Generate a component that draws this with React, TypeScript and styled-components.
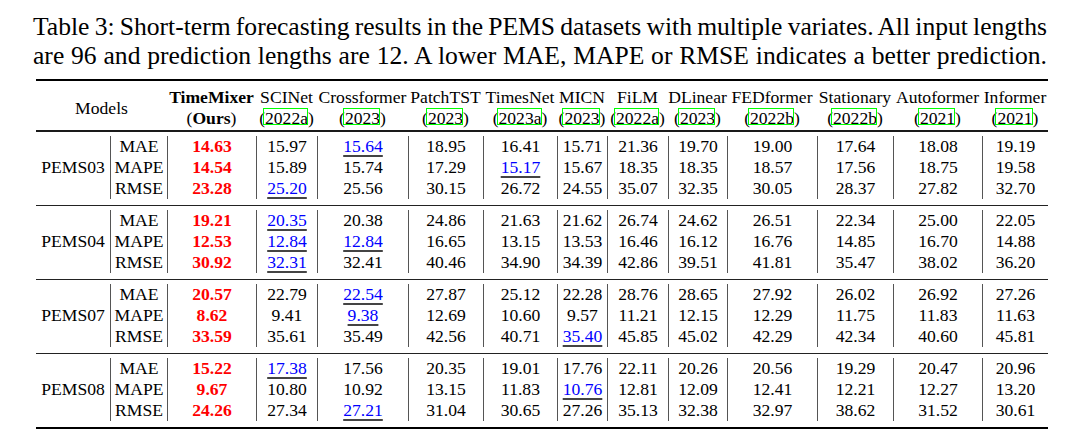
import React from 'react';
import styled, { createGlobalStyle, css } from 'styled-components';

const SERIF = '"Liberation Serif", "Times New Roman", "DejaVu Serif", serif';

const GlobalStyle = createGlobalStyle`
  html, body { margin: 0; padding: 0; background: #fff; }
  body { font-family: ${SERIF}; color: #000; }
`;

const COLS = '74px 57px 89px 61px 91px 75px 74px 50px 61px 59px 90px 76px 89px 66px';

type Kind = 'n' | 'b' | 's';

const Page = styled.div`
  width: 1080px;
  height: 446px;
  box-sizing: border-box;
  padding: 13px 0 0 33px;
  overflow: hidden;
  font-family: ${SERIF};
`;

const Caption = styled.div`
  width: 1014px;
  font-family: ${SERIF};
  font-size: 25.6px;
  line-height: 28.5px;
  color: #000;
`;

const CaptionLine = styled.p<{ $spacing: number }>`
  margin: 0;
  font-family: ${SERIF};
  text-align: justify;
  text-align-last: justify;
  word-spacing: ${(p) => p.$spacing}px;
`;

const Table = styled.div`
  margin: 9px 0 0 3px;
  width: 1012px;
  font-family: ${SERIF};
  font-size: 17.6px;
  line-height: 21px;
  color: #000;
  border-top: 2px solid #000;
  border-bottom: 2px solid #000;
`;

const HeaderRow = styled.div`
  display: grid;
  grid-template-columns: ${COLS};
  padding: 6px 0 1px;
  border-bottom: 2px solid #1a1a1a;
`;

const ModelsCell = styled.div`
  grid-column: span 2;
  display: flex;
  align-items: center;
  justify-content: center;
`;

const HeadCell = styled.div`
  display: flex;
  flex-direction: column;
  align-items: center;
  white-space: nowrap;
`;

const HeadName = styled.span<{ $bold?: boolean }>`
  font-weight: ${(p) => (p.$bold ? 700 : 400)};
`;

const Strong = styled.b`
  font-weight: 700;
`;

const Cite = styled.span`
  position: relative;
  &::after {
    content: '';
    position: absolute;
    left: -2px;
    right: 0;
    top: 0;
    bottom: 3px;
    border: 1px solid #00ff00;
  }
`;

const Group = styled.div`
  display: grid;
  grid-template-columns: ${COLS};
  grid-template-rows: repeat(3, 21px);
  padding: 4px 0 6px;
  & + & {
    border-top: 1px solid #222;
  }
`;

const DatasetCell = styled.div`
  grid-column: 1;
  grid-row: 1 / span 3;
  display: flex;
  align-items: center;
  justify-content: center;
  white-space: nowrap;
`;

const MetricCell = styled.div`
  grid-column: 2;
  border-left: 1px solid #555;
  text-align: center;
  white-space: nowrap;
`;

const ValueCell = styled.div`
  border-left: 1px solid #555;
  text-align: center;
  white-space: nowrap;
`;

const Value = styled.span<{ $kind: Kind }>`
  ${(p) =>
    p.$kind === 'b' &&
    css`
      color: #ff0000;
      font-weight: 700;
    `}
  ${(p) =>
    p.$kind === 's' &&
    css`
      color: #0000ff;
      text-decoration: underline;
      text-decoration-color: #444;
      text-decoration-thickness: 2px;
      text-underline-offset: 3px;
    `}
`;

const models: { name: string; year: string; ours?: boolean }[] = [
  { name: 'TimeMixer', year: 'Ours', ours: true },
  { name: 'SCINet', year: '2022a' },
  { name: 'Crossformer', year: '2023' },
  { name: 'PatchTST', year: '2023' },
  { name: 'TimesNet', year: '2023a' },
  { name: 'MICN', year: '2023' },
  { name: 'FiLM', year: '2022a' },
  { name: 'DLinear', year: '2023' },
  { name: 'FEDformer', year: '2022b' },
  { name: 'Stationary', year: '2022b' },
  { name: 'Autoformer', year: '2021' },
  { name: 'Informer', year: '2021' },
];

// value strings; suffix '*' = best (red bold), '_' = second (blue underline)
const groups: { name: string; rows: [string, string[]][] }[] = [
  {
    name: 'PEMS03',
    rows: [
      ['MAE', ['14.63*', '15.97', '15.64_', '18.95', '16.41', '15.71', '21.36', '19.70', '19.00', '17.64', '18.08', '19.19']],
      ['MAPE', ['14.54*', '15.89', '15.74', '17.29', '15.17_', '15.67', '18.35', '18.35', '18.57', '17.56', '18.75', '19.58']],
      ['RMSE', ['23.28*', '25.20_', '25.56', '30.15', '26.72', '24.55', '35.07', '32.35', '30.05', '28.37', '27.82', '32.70']],
    ],
  },
  {
    name: 'PEMS04',
    rows: [
      ['MAE', ['19.21*', '20.35_', '20.38', '24.86', '21.63', '21.62', '26.74', '24.62', '26.51', '22.34', '25.00', '22.05']],
      ['MAPE', ['12.53*', '12.84_', '12.84_', '16.65', '13.15', '13.53', '16.46', '16.12', '16.76', '14.85', '16.70', '14.88']],
      ['RMSE', ['30.92*', '32.31_', '32.41', '40.46', '34.90', '34.39', '42.86', '39.51', '41.81', '35.47', '38.02', '36.20']],
    ],
  },
  {
    name: 'PEMS07',
    rows: [
      ['MAE', ['20.57*', '22.79', '22.54_', '27.87', '25.12', '22.28', '28.76', '28.65', '27.92', '26.02', '26.92', '27.26']],
      ['MAPE', ['8.62*', '9.41', '9.38_', '12.69', '10.60', '9.57', '11.21', '12.15', '12.29', '11.75', '11.83', '11.63']],
      ['RMSE', ['33.59*', '35.61', '35.49', '42.56', '40.71', '35.40_', '45.85', '45.02', '42.29', '42.34', '40.60', '45.81']],
    ],
  },
  {
    name: 'PEMS08',
    rows: [
      ['MAE', ['15.22*', '17.38_', '17.56', '20.35', '19.01', '17.76', '22.11', '20.26', '20.56', '19.29', '20.47', '20.96']],
      ['MAPE', ['9.67*', '10.80', '10.92', '13.15', '11.83', '10.76_', '12.81', '12.09', '12.41', '12.21', '12.27', '13.20']],
      ['RMSE', ['24.26*', '27.34', '27.21_', '31.04', '30.65', '27.26', '35.13', '32.38', '32.97', '38.62', '31.52', '30.61']],
    ],
  },
];

const parse = (v: string): [string, Kind] => {
  if (v.endsWith('*')) return [v.slice(0, -1), 'b'];
  if (v.endsWith('_')) return [v.slice(0, -1), 's'];
  return [v, 'n'];
};

export default function App() {
  return (
    <Page>
      <GlobalStyle />
      <Caption>
        <CaptionLine $spacing={-1.8}>
          Table 3: Short-term forecasting results in the PEMS datasets with multiple variates. All input lengths
        </CaptionLine>
        <CaptionLine $spacing={-1}>
          are 96 and prediction lengths are 12. A lower MAE, MAPE or RMSE indicates a better prediction.
        </CaptionLine>
      </Caption>
      <Table>
        <HeaderRow>
          <ModelsCell>Models</ModelsCell>
          {models.map((m) => (
            <HeadCell key={m.name}>
              <HeadName $bold={m.ours}>{m.name}</HeadName>
              <span>
                (
                {m.ours ? <Strong>{m.year}</Strong> : <Cite>{m.year}</Cite>})
              </span>
            </HeadCell>
          ))}
        </HeaderRow>
        {groups.map((g) => (
          <Group key={g.name}>
            <DatasetCell>{g.name}</DatasetCell>
            {g.rows.map(([metric, vals]) => (
              <React.Fragment key={metric}>
                <MetricCell>{metric}</MetricCell>
                {vals.map((v, i) => {
                  const [text, kind] = parse(v);
                  return (
                    <ValueCell key={i}>
                      <Value $kind={kind}>{text}</Value>
                    </ValueCell>
                  );
                })}
              </React.Fragment>
            ))}
          </Group>
        ))}
      </Table>
    </Page>
  );
}
